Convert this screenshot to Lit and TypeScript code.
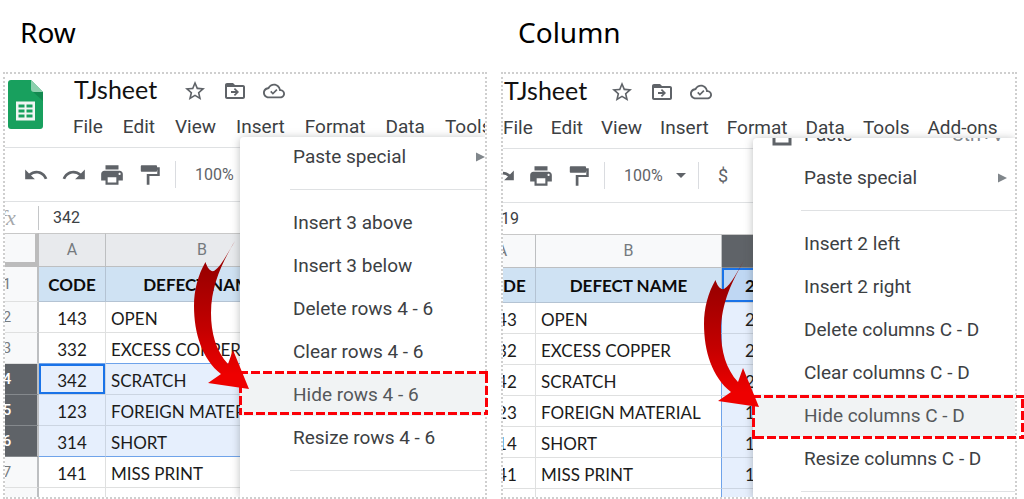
import { LitElement, html, css, svg } from "lit";
import { customElement, property } from "lit/decorators.js";
import { classMap } from "lit/directives/class-map.js";

interface Panel {
  heading: string;
  kind: "row" | "column";
  cellValue: string;
  items: string[];
  highlighted: number;
}

const PANELS: Panel[] = [
  {
    heading: "Row",
    kind: "row",
    cellValue: "342",
    items: ["Insert 3 above", "Insert 3 below", "Delete rows 4 - 6", "Clear rows 4 - 6", "Hide rows 4 - 6", "Resize rows 4 - 6"],
    highlighted: 4,
  },
  {
    heading: "Column",
    kind: "column",
    cellValue: "2019",
    items: ["Insert 2 left", "Insert 2 right", "Delete columns C - D", "Clear columns C - D", "Hide columns C - D", "Resize columns C - D"],
    highlighted: 4,
  },
];

const MENUS = ["File", "Edit", "View", "Insert", "Format", "Data", "Tools", "Add-ons"];

const ROWS: [string, string, string][] = [
  ["CODE", "DEFECT NAME", "2"],
  ["143", "OPEN", "2"],
  ["332", "EXCESS COPPER", "2"],
  ["342", "SCRATCH", "2"],
  ["123", "FOREIGN MATERIAL", "1"],
  ["314", "SHORT", "1"],
  ["141", "MISS PRINT", "1"],
  ["", "", ""],
];

const icons = {
  star: svg`<path d="M22 9.24l-7.19-.62L12 2 9.19 8.63 2 9.24l5.46 4.73L5.82 21 12 17.27 18.18 21l-1.63-7.03L22 9.24zM12 15.4l-3.76 2.27 1-4.28-3.32-2.88 4.38-.38L12 6.1l1.71 4.04 4.38.38-3.32 2.88 1 4.28L12 15.4z"/>`,
  move: svg`<path d="M20 6h-8l-2-2H4c-1.1 0-2 .9-2 2v12c0 1.100.9 2 2 2h16c1.100 0 2-.9 2-2V8c0-1.100-.9-2-2-2zm0 12H4V8h16v10zM12 17l4-4-4-4-1.200 1.200 1.900 1.900H8v1.800h4.700l-1.900 1.900z"/>`,
  cloud: svg`<path d="M19.350 10.040C18.670 6.590 15.640 4 12 4 9.110 4 6.600 5.640 5.350 8.040 2.340 8.360 0 10.910 0 14c0 3.310 2.690 6 6 6h13c2.760 0 5-2.240 5-5 0-2.640-2.050-4.780-4.650-4.960zM19 18H6c-2.210 0-4-1.790-4-4 0-2.050 1.530-3.760 3.560-3.970l1.070-.110.500-.950C8.080 7.140 9.940 6 12 6c2.620 0 4.880 1.860 5.390 4.430l.300 1.500 1.530.110c1.560.100 2.780 1.410 2.780 2.960 0 1.650-1.350 3-3 3zM10.800 16.100l-3-3 1.300-1.300 1.700 1.700 3.700-3.700 1.300 1.300z"/>`,
  undo: svg`<path d="M12.500 8c-2.650 0-5.050.990-6.900 2.600L2 7v9h9l-3.620-3.620c1.390-1.160 3.160-1.880 5.120-1.880 3.540 0 6.550 2.310 7.600 5.500l2.370-.780C21.080 11.030 17.150 8 12.500 8z"/>`,
  redo: svg`<path d="M18.400 10.600C16.550 8.990 14.150 8 11.500 8c-4.650 0-8.580 3.030-9.960 7.220L3.900 16c1.050-3.190 4.050-5.500 7.600-5.500 1.950 0 3.730.720 5.120 1.880L13 16h9V7l-3.600 3.600z"/>`,
  print: svg`<path d="M19 8H5c-1.660 0-3 1.340-3 3v6h4v4h12v-4h4v-6c0-1.660-1.340-3-3-3zm-3 11H8v-5h8v5zm3-7c-.550 0-1-.450-1-1s.450-1 1-1 1 .450 1 1-.450 1-1 1zm-1-9H6v4h12V3z"/>`,
  paint: svg`<path d="M4.500 3h13c.600 0 1 .400 1 1v.800H21v8.200h-9.500v8H9v-10h9.700V7.200h-.200V8c0 .600-.400 1-1 1h-13c-.600 0-1-.400-1-1V4c0-.600.400-1 1-1z"/>`,
};

@customElement("sheet-panel")
export class SheetPanel extends LitElement {
  @property({ attribute: false }) panel!: Panel;

  static styles = css`
    :host {
      --ink: #3c4043;
      --icon: #5f6368;
      --shift: 0px;
      --drop: 0px;
      --title-width: 93px;
      --menu-gap: 20px;
      --tool-start: 18px;
      --menu-left: 235px;
      --menu-scroll: 45px;
      --item-inset: 53px;
      --item-end: 0px;
      --callout-top: 297px;
      --callout-end: -3px;
      --arrow-left: 180px;
      --arrow-top: 161px;
      --name-width: 193px;
      display: flex;
      flex-direction: column;
      min-width: 0;
      min-height: 0;
      font-family: Roboto, "Liberation Sans", sans-serif;
      color: var(--ink);
    }
    :host([kind="column"]) {
      --shift: -68px;
      --drop: 1px;
      --title-width: 90px;
      --menu-gap: 18px;
      --tool-start: 17px;
      --menu-left: 250px;
      --menu-scroll: 25px;
      --item-inset: 51px;
      --item-end: 8px;
      --callout-top: 321px;
      --callout-end: -9px;
      --arrow-left: 192px;
      --arrow-top: 179px;
      --name-width: 186px;
    }
    button, input, select {
      font: inherit;
      color: inherit;
      background: none;
      border: 0;
      margin: 0;
      padding: 0;
    }
    .heading {
      margin: 0;
      height: 72px;
      padding: 0 17px 8px;
      box-sizing: border-box;
      display: flex;
      align-items: center;
      font: 400 28px/40px "Noto Sans", "Open Sans", sans-serif;
      color: #000;
    }
    .frame {
      position: relative;
      flex: 1;
      min-height: 0;
      border: 2px dotted #cfcfcf;
      display: flex;
    }
    .view {
      flex: 1;
      min-width: 0;
      overflow: hidden;
      position: relative;
    }
    .doc {
      margin-left: var(--shift);
      padding-top: var(--drop);
      width: max-content;
      min-width: calc(100% + 68px);
    }
    .header {
      display: flex;
      gap: 25px;
      height: 73px;
      padding-left: 3px;
      border-bottom: 1px solid #dfe1e3;
      align-items: flex-start;
    }
    .logo {
      width: 35px;
      height: 49px;
      margin-top: 6px;
      flex: none;
    }
    .titlebar {
      display: flex;
      align-items: center;
      height: 34px;
      gap: 16px;
      padding-left: 6px;
    }
    .title {
      width: var(--title-width);
      margin: 0;
      padding-bottom: 4px;
      font: 400 25px/30px Lato, sans-serif;
      color: #111;
    }
    .icon {
      display: flex;
      color: var(--icon);
    }
    .icon svg { width: 24px; height: 24px; fill: currentColor; }
    .titlebar .icon svg.cloud { width: 22px; height: 24px; }
    .menubar {
      display: flex;
      gap: var(--menu-gap);
      padding-left: 5px;
      font-size: 19px;
      line-height: 38px;
    }
    .toolbar {
      display: flex;
      align-items: center;
      gap: 12px;
      height: 53px;
      padding-left: var(--tool-start);
      border-bottom: 1px solid #dfe1e3;
      color: var(--icon);
      font-size: 16px;
    }
    .toolbar .icon svg { width: 26px; height: 26px; }
    .rule { width: 1px; height: 27px; background: #dadce0; }
    .zoom { display: flex; align-items: center; margin-left: 7px; }
    .zoom select { appearance: none; width: 52px; }
    .caret { width: 10px; height: 5px; fill: var(--icon); }
    .currency { margin-left: 7px; font-size: 18px; }
    .formula {
      display: flex;
      align-items: center;
      height: 31px;
      font-size: 16px;
    }
    .fx {
      width: 33px;
      box-sizing: border-box;
      margin-left: -5px;
      margin-right: 5px;
      font: italic 22px/24px "Liberation Serif", serif;
      color: #a5a8ab;
    }
    .formula .rule { height: 24px; background: #c4c6c8; }
    .formula input { width: 160px; margin-left: 14px; height: 24px; }
    table {
      border-collapse: separate;
      border-spacing: 0;
      table-layout: fixed;
      margin-left: -28px;
      width: calc(329px + var(--name-width));
      font: 400 17px/20px Lato, sans-serif;
      color: #1b1b1b;
    }
    .c-num { width: 62px; }
    .c-code { width: 67px; }
    .c-name { width: var(--name-width); }
    .c-year { width: 200px; }
    th, td {
      box-sizing: border-box;
      height: 31px;
      padding: 4px 5px 0;
      border-right: 1px solid #dfe0e0;
      border-bottom: 1px solid #dfe0e0;
      font-weight: 400;
      text-align: left;
      white-space: nowrap;
      background: #fff;
    }
    thead th {
      height: 34px;
      border-top: 1px solid #c8c8c8;
      border-right-color: #bdbfc1;
      border-bottom-color: #bdbfc1;
      font: 400 16px/20px Roboto, sans-serif;
      text-align: center;
      color: #757a7e;
      background: #f8f9fa;
      padding: 0;
    }
    thead .touched { background: #e8eaed; }
    thead .corner { border-right: 4px solid #bcbcbc; border-bottom: 5px solid #bcbcbc; }
    th.num {
      text-align: center;
      padding: 0;
      font: 400 15px/20px Roboto, sans-serif;
      color: #757a7e;
      background: #f8f9fa;
      border-right: 2px solid #bdbfc1;
    }
    th.picked, thead th.picked { background: #5f6368; color: #fff; font-weight: 500; border-bottom-color: #85898d; }
    .code { text-align: center; }
    .year { padding-left: 23px; }
    .lead th, .lead td { height: 35px; }
    .lead td {
      padding-top: 2px;
      font-weight: 700;
      background: #cfe2f3;
      border-color: #b4c3d3;
      color: #0b0b0b;
    }
    .lead .name { text-align: center; }
    td.selected { background: #e6effd; border-right-color: #ccd5e2; border-bottom-color: #ccd5e2; }
    .edge td { border-bottom-color: #6fa3ea; }
    td.active { box-shadow: inset 0 0 0 2px #1a73e8; }
    td.active.year { background: #bfd7f3; }
    .leftline { border-right-color: #6fa3ea; }
    .menu {
      position: absolute;
      top: calc(63px + var(--drop));
      left: var(--menu-left);
      right: 0;
      bottom: 0;
      overflow: hidden;
      border-radius: 4px 0 0 0;
      background: #fff;
      box-shadow: 0 1px 8px rgba(60, 64, 67, 0.35);
      font-size: 19px;
    }
    .list { margin-top: calc(0px - var(--menu-scroll)); }
    .item {
      display: flex;
      align-items: center;
      width: 100%;
      height: 43px;
      padding-left: var(--item-inset);
      padding-right: var(--item-end);
      text-align: left;
      position: relative;
      white-space: nowrap;
    }
    .item.on { background: #f1f3f4; color: #55585b; }
    .item .key { margin-left: auto; padding-right: 3px; color: #80868b; }
    .item svg.tri { margin-left: auto; width: 9px; height: 12px; fill: #80868b; }
    .item svg.clip { position: absolute; left: 17px; top: 7px; width: 24px; height: 26px; fill: none; stroke: var(--icon); stroke-width: 3; }
    .divider { height: 1px; margin: 11px 0 11px calc(var(--item-inset) - 3px); background: #dfe1e3; }
    .callout {
      position: absolute;
      top: var(--callout-top);
      left: calc(var(--menu-left) - 1px);
      right: var(--callout-end);
      height: 44px;
      pointer-events: none;
    }
    .callout svg { display: block; width: 100%; height: 100%; overflow: hidden; }
    .callout rect { fill: none; stroke: #fb0007; stroke-width: 6; stroke-dasharray: 9 3; }
    .arrow {
      position: absolute;
      top: var(--arrow-top);
      left: var(--arrow-left);
      width: 75px;
      height: 160px;
      pointer-events: none;
    }
  `;

  private icon(name: keyof typeof icons, label: string) {
    return html`<button class="icon" aria-label=${label}><svg class=${name} viewBox="0 0 24 24">${icons[name]}</svg></button>`;
  }

  private row(cells: [string, string, string], i: number) {
    const rowMode = this.panel.kind === "row";
    const picked = rowMode && i >= 3 && i <= 5;
    const base = { selected: picked };
    return html`<tr class=${classMap({ lead: i === 0, edge: rowMode && (i === 2 || i === 5) })}>
      <th scope="row" class=${classMap({ num: true, picked })}>${i + 1}</th>
      <td class=${classMap({ code: true, ...base, active: rowMode && i === 3 })}>${cells[0]}</td>
      <td class=${classMap({ name: true, ...base, leftline: !rowMode })}>${cells[1]}</td>
      <td class=${classMap({ year: true, selected: picked || !rowMode, active: !rowMode && i === 0 })}>${cells[2]}</td>
    </tr>`;
  }

  private item(label: string, i: number) {
    return html`<button role="menuitem" class=${classMap({ item: true, on: i === this.panel.highlighted })}>${label}</button>`;
  }

  render() {
    const p = this.panel;
    const head = classMap({ touched: p.kind === "row" });
    return html`
      <h2 class="heading">${p.heading}</h2>
      <div class="frame">
        <div class="view">
          <div class="doc">
            <div class="header">
              <svg class="logo" viewBox="0 0 35 49" aria-hidden="true">
                <path fill="#18a05e" d="M3 0h20l12 12v34a3 3 0 0 1-3 3H3a3 3 0 0 1-3-3V3a3 3 0 0 1 3-3z" />
                <path fill="#128a50" d="M24 11l11 10v-9z" />
                <path fill="#8dd0ae" d="M23 0l12 12H26a3 3 0 0 1-3-3z" />
                <path fill="#f1f5f3" fill-rule="evenodd" d="M8 21.500h19v19H8zM10.500 24.500v3h6v-3zM18.500 24.500v3h6v-3zM10.500 29.500v3h6v-3zM18.500 29.500v3h6v-3zM10.500 34.500v3h6v-3zM18.500 34.500v3h6v-3z" />
              </svg>
              <div>
                <div class="titlebar">
                  <h3 class="title">TJsheet</h3>
                  ${this.icon("star", "Star")} ${this.icon("move", "Move")} ${this.icon("cloud", "Saved status")}
                </div>
                <nav class="menubar">${MENUS.map((m) => html`<button>${m}</button>`)}</nav>
              </div>
            </div>
            <div class="toolbar">
              ${this.icon("undo", "Undo")} ${this.icon("redo", "Redo")} ${this.icon("print", "Print")} ${this.icon("paint", "Paint format")}
              <span class="rule"></span>
              <label class="zoom">
                <select aria-label="Zoom level"><option>100%</option></select>
                <svg class="caret" viewBox="0 0 10 5"><path d="M0 0h10L5 5z" /></svg>
              </label>
              <span class="rule"></span>
              <button class="currency">$</button>
            </div>
            <div class="formula">
              <span class="fx">fx</span>
              <span class="rule"></span>
              <input aria-label="Cell value" .value=${p.cellValue} />
            </div>
            <table>
              <colgroup><col class="c-num" /><col class="c-code" /><col class="c-name" /><col class="c-year" /></colgroup>
              <thead>
                <tr>
                  <th class="corner"></th>
                  <th scope="col" class=${head}>A</th>
                  <th scope="col" class=${head}>B</th>
                  <th scope="col" class=${classMap({ picked: p.kind === "column" })}></th>
                </tr>
              </thead>
              <tbody>${ROWS.map((r, i) => this.row(r, i))}</tbody>
            </table>
          </div>
          <div class="menu" role="menu">
            <div class="list">
              <button role="menuitem" class="item">
                <svg class="clip" viewBox="0 0 24 26"><path d="M4 4h16v20H4z" /></svg>
                Paste<span class="key">Ctrl+V</span>
              </button>
              <button role="menuitem" class="item">
                Paste special<svg class="tri" viewBox="0 0 9 12"><path d="M0 1.500l9 4.500-9 4.500z" /></svg>
              </button>
              <div class="divider"></div>
              ${p.items.map((t, i) => this.item(t, i))}
              <div class="divider"></div>
            </div>
          </div>
        </div>
        <div class="callout"><svg><rect width="100%" height="100%" /></svg></div>
        <svg class="arrow" viewBox="0 0 75 160" aria-hidden="true">
          <defs>
            <linearGradient id="red" x1="0" y1="0" x2="0" y2="1">
              <stop offset="0.200" stop-color="#9c0000" />
              <stop offset="0.600" stop-color="#c40000" />
              <stop offset="0.900" stop-color="#ee0000" />
            </linearGradient>
          </defs>
          <path fill="url(#red)" d="M50 6C43 17 36 32 29 36C25 37 22 32 20.500 27C13 40 9 55 9 71C9 98 17 124 36 139L23 148L64 154L48 115L43 129C31 116 26 98 26 78C26 50 38 26 50 6z" />
        </svg>
      </div>
    `;
  }
}

@customElement("app-root")
export class AppRoot extends LitElement {
  static styles = css`
    :host {
      display: grid;
      grid-template-columns: 484fr 516fr;
      grid-template-rows: minmax(0, 1fr);
      gap: 14px;
      height: 100vh;
      box-sizing: border-box;
      padding: 0 7px 0 3px;
      background: #fff;
      overflow: hidden;
    }
  `;

  render() {
    return PANELS.map((p) => html`<sheet-panel kind=${p.kind} .panel=${p}></sheet-panel>`);
  }
}
